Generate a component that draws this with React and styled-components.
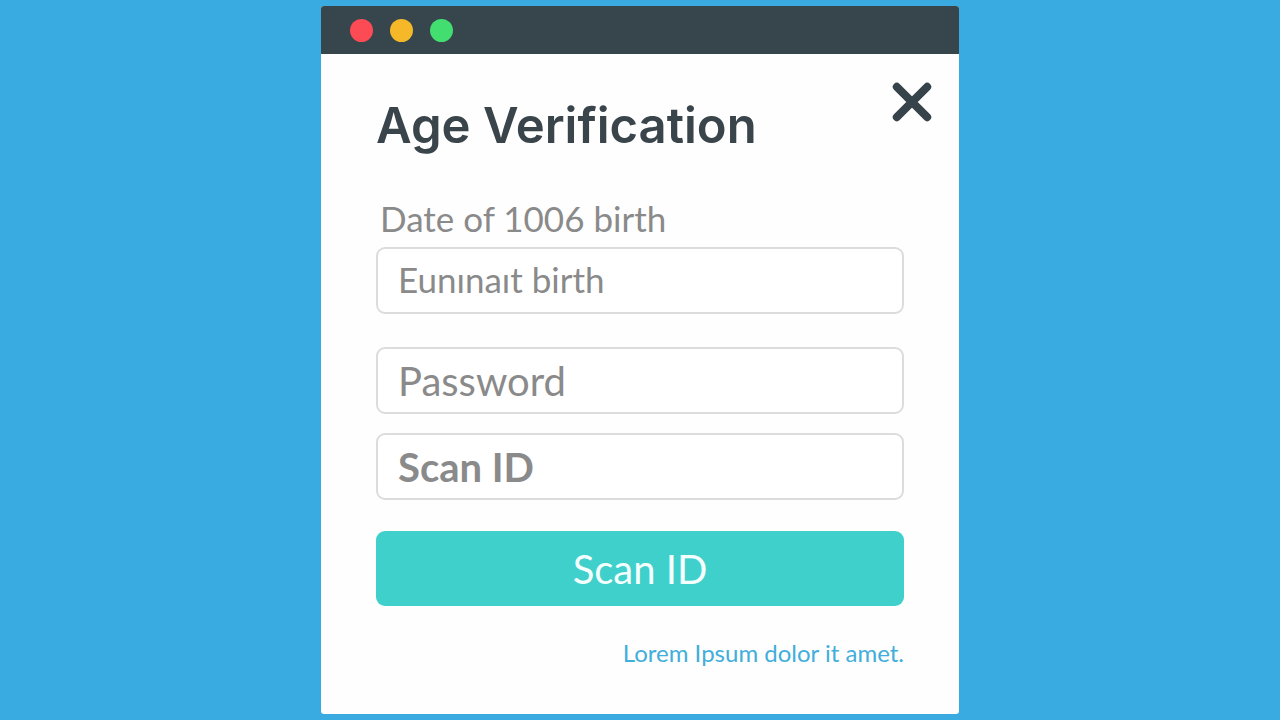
import React from 'react';
import styled, { createGlobalStyle } from 'styled-components';

const GlobalStyle = createGlobalStyle`
  * {
    box-sizing: border-box;
  }

  body {
    margin: 0;
    background: #3aabe1;
    font-family: Lato, "Open Sans", sans-serif;
  }
`

const Page = styled.main`
  display: flex;
  justify-content: center;
  min-height: 100vh;
  align-items: flex-start;
  padding: 6px 16px;
`

const Window = styled.section`
  width: 100%;
  max-width: 638px;
  background: #fefefe;
  border-radius: 3px;
  overflow: hidden;
`

const TitleBar = styled.div`
  display: flex;
  align-items: center;
  gap: 17px;
  height: 48px;
  padding: 0 29px;
  background: #37454d;
`

const Dot = styled.span`
  width: 23px;
  height: 23px;
  border-radius: 50%;
  background: ${props => props.$color};
`

const Content = styled.div`
  position: relative;
  padding: 40px 55px 45px;
`

const CloseButton = styled.button`
  position: absolute;
  top: 24px;
  right: 23px;
  display: flex;
  padding: 0;
  border: 0;
  background: none;
  cursor: pointer;
`

const Title = styled.h1`
  margin: 0 0 38px;
  color: #3a444b;
  font-family: Inter, sans-serif;
  font-size: 49px;
  font-weight: 600;
  line-height: 64px;
`

const Form = styled.form`
  display: flex;
  flex-direction: column;
`

const Label = styled.label`
  padding: 0 4px;
  margin-bottom: 7px;
  color: #8a8a8a;
  font-size: 35px;
  line-height: 44px;
`

const Input = styled.input`
  width: 100%;
  height: 67px;
  margin-bottom: ${props => props.$gap}px;
  padding: 0 20px ${props => props.$small ? 4 : 0}px;
  border: 2px solid #dcdcdc;
  border-radius: 9px;
  background: #fff;
  color: #8a8a8a;
  font-family: inherit;
  font-size: ${props => props.$small ? 35 : 40}px;
  font-weight: ${props => props.$bold ? 700 : 400};

  &::placeholder {
    color: #8a8a8a;
    opacity: 1;
  }
`

const SubmitButton = styled.button`
  height: 75px;
  border: 0;
  border-radius: 9px;
  background: #3fd0cc;
  color: #f4fffe;
  font-family: inherit;
  font-size: 40px;
  cursor: pointer;
`

const FootLink = styled.a`
  align-self: flex-end;
  margin-top: 31px;
  color: #42aedb;
  font-size: 24px;
  line-height: 32px;
  text-decoration: none;
`

const App = () => (
  <Page>
    <GlobalStyle />
    <Window>
      <TitleBar>
        <Dot $color="#fd4b55" />
        <Dot $color="#f5b828" />
        <Dot $color="#42de70" />
      </TitleBar>
      <Content>
        <CloseButton type="button" aria-label="Close">
          <svg width="48" height="48" viewBox="0 0 48 48">
            <path d="M8.8 8.8L39.2 39.2M39.2 8.8L8.8 39.2" stroke="#37434a" strokeWidth="8" strokeLinecap="round" />
          </svg>
        </CloseButton>
        <Title>Age Verification</Title>
        <Form onSubmit={e => e.preventDefault()}>
          <Label htmlFor="birth">Date of 1006 birth</Label>
          <Input id="birth" type="text" placeholder="Eunınaıt birth" $gap={33} $small />
          <Input type="password" aria-label="Password" placeholder="Password" $gap={19} />
          <Input type="text" aria-label="Scan ID" placeholder="Scan ID" $gap={31} $bold />
          <SubmitButton type="submit">Scan ID</SubmitButton>
          <FootLink href="#">Lorem Ipsum dolor it amet.</FootLink>
        </Form>
      </Content>
    </Window>
  </Page>
);

export default App;
